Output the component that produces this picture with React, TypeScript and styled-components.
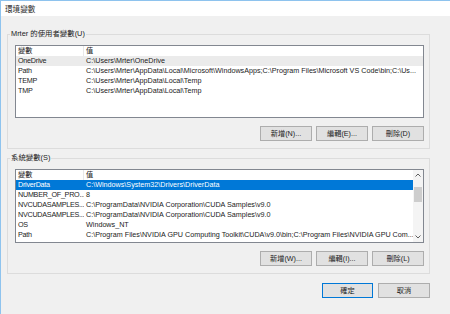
import React from "react";
import styled, { createGlobalStyle } from "styled-components";

const Global = createGlobalStyle`
  html, body { margin: 0; padding: 0; background: #f0f0f0; }
  #root { width: 450px; height: 314px; }
`;

const Window = styled.div`
  width: 450px;
  height: 314px;
  box-sizing: border-box;
  border-top: 1px solid #8ec3ee;
  border-left: 1px solid #8ec3ee;
  background: #f0f0f0;
  display: flex;
  flex-direction: column;
  font-family: "Liberation Sans", "Noto Sans CJK TC", sans-serif;
  font-size: 7.2px;
  color: #1b1b1b;
  overflow: hidden;
`;

const TitleBar = styled.div`
  height: 15px;
  flex: none;
  background: #ffffff;
  display: flex;
  align-items: center;
  padding-left: 4px;
  font-size: 7.6px;
  color: #222;
`;

const Body = styled.div`
  display: flex;
  flex-direction: column;
  padding: 13px 20px 0 6px;
  gap: 4px;
`;

const Group = styled.fieldset`
  margin: 0;
  padding: 0;
  border: 1px solid #dcdcdc;
  min-width: 0;
`;

const Legend = styled.legend`
  margin-left: 2px;
  padding: 0 1px;
  line-height: 10px;
  height: 10px;
  font-size: 7.4px;
  color: #222;
`;

const GroupInner = styled.div`
  padding: 6px 5px 7px 7px;
  display: flex;
  flex-direction: column;
  gap: 8px;
`;

const ListView = styled.div<{ $height: number }>`
  height: ${(p) => p.$height}px;
  box-sizing: border-box;
  border: 1px solid #828790;
  background: #ffffff;
  display: flex;
  overflow: hidden;
`;

const ListBody = styled.div`
  flex: 1;
  min-width: 0;
  display: flex;
  flex-direction: column;
`;

const HeaderRow = styled.div`
  display: grid;
  grid-template-columns: 68px 1fr;
  height: 10px;
  line-height: 10px;
`;

const HeaderCell = styled.div<{ $sep?: boolean }>`
  padding-left: 2px;
  white-space: nowrap;
  overflow: hidden;
  border-right: ${(p) => (p.$sep ? "1px solid #e8e8e8" : "none")};
`;

const Row = styled.div<{ $selected?: boolean; $hover?: boolean }>`
  display: grid;
  grid-template-columns: 68px 1fr;
  height: 10px;
  line-height: 10px;
  background: ${(p) => (p.$selected ? "#0078d7" : p.$hover ? "#ebebeb" : "transparent")};
  color: ${(p) => (p.$selected ? "#ffffff" : "inherit")};
`;

const Cell = styled.div<{ $tight?: boolean }>`
  padding-left: 2px;
  white-space: nowrap;
  overflow: hidden;
  letter-spacing: ${(p) => (p.$tight ? "-0.25px" : "normal")};
`;

const ScrollBar = styled.div`
  width: 10px;
  flex: none;
  background: #f4f4f4;
  display: flex;
  flex-direction: column;
`;

const Arrow = styled.div`
  height: 10px;
  flex: none;
  display: flex;
  align-items: center;
  justify-content: center;
  background: #f4f4f4;
`;

const Track = styled.div`
  flex: 1;
  padding-top: 7px;
`;

const Thumb = styled.div`
  height: 15px;
  margin: 0 1px;
  background: #cdcdcd;
`;

const ButtonRow = styled.div`
  display: flex;
  justify-content: flex-end;
  gap: 4px;
`;

const Button = styled.button<{ $default?: boolean; $w?: number }>`
  width: ${(p) => p.$w ?? 52}px;
  height: 15px;
  box-sizing: border-box;
  padding: 0;
  margin: 0;
  border: 1px solid ${(p) => (p.$default ? "#0078d7" : "#adadad")};
  background: #e1e1e1;
  font-family: inherit;
  font-size: 7.2px;
  color: #1b1b1b;
  line-height: 13px;
`;

const Footer = styled.div`
  display: flex;
  justify-content: flex-end;
  gap: 5px;
  margin-top: 5px;
`;

const Chevron = ({ up }: { up?: boolean }) => (
  <svg width="6" height="4" viewBox="0 0 6 4">
    <polyline
      points={up ? "0.5,3.5 3,1 5.5,3.5" : "0.5,0.5 3,3 5.5,0.5"}
      fill="none"
      stroke="#606060"
      strokeWidth="1"
    />
  </svg>
);

type Item = { name: string; value: string; selected?: boolean; hover?: boolean };

const userVars: Item[] = [
  { name: "OneDrive", value: "C:\\Users\\Mrter\\OneDrive", hover: true },
  {
    name: "Path",
    value:
      "C:\\Users\\Mrter\\AppData\\Local\\Microsoft\\WindowsApps;C:\\Program Files\\Microsoft VS Code\\bin;C:\\Us...",
  },
  { name: "TEMP", value: "C:\\Users\\Mrter\\AppData\\Local\\Temp" },
  { name: "TMP", value: "C:\\Users\\Mrter\\AppData\\Local\\Temp" },
];

const sysVars: Item[] = [
  { name: "DriverData", value: "C:\\Windows\\System32\\Drivers\\DriverData", selected: true },
  { name: "NUMBER_OF_PRO...", value: "8" },
  { name: "NVCUDASAMPLES...", value: "C:\\ProgramData\\NVIDIA Corporation\\CUDA Samples\\v9.0" },
  { name: "NVCUDASAMPLES...", value: "C:\\ProgramData\\NVIDIA Corporation\\CUDA Samples\\v9.0" },
  { name: "OS", value: "Windows_NT" },
  {
    name: "Path",
    value:
      "C:\\Program Files\\NVIDIA GPU Computing Toolkit\\CUDA\\v9.0\\bin;C:\\Program Files\\NVIDIA GPU Com...",
  },
];

const VarList = ({ items, height, scroll }: { items: Item[]; height: number; scroll?: boolean }) => (
  <ListView $height={height}>
    <ListBody>
      <HeaderRow>
        <HeaderCell $sep>變數</HeaderCell>
        <HeaderCell>值</HeaderCell>
      </HeaderRow>
      {items.map((it, i) => (
        <Row key={i} $selected={it.selected} $hover={it.hover}>
          <Cell $tight>{it.name}</Cell>
          <Cell>{it.value}</Cell>
        </Row>
      ))}
    </ListBody>
    {scroll && (
      <ScrollBar>
        <Arrow>
          <Chevron up />
        </Arrow>
        <Track>
          <Thumb />
        </Track>
        <Arrow>
          <Chevron />
        </Arrow>
      </ScrollBar>
    )}
  </ListView>
);

export default function App() {
  return (
    <>
      <Global />
      <Window>
        <TitleBar>環境變數</TitleBar>
        <Body>
          <Group>
            <Legend>Mrter 的使用者變數(U)</Legend>
            <GroupInner>
              <VarList items={userVars} height={73} />
              <ButtonRow>
                <Button>新增(N)...</Button>
                <Button>編輯(E)...</Button>
                <Button>刪除(D)</Button>
              </ButtonRow>
            </GroupInner>
          </Group>
          <Group>
            <Legend>系統變數(S)</Legend>
            <GroupInner>
              <VarList items={sysVars} height={74} scroll />
              <ButtonRow>
                <Button>新增(W)...</Button>
                <Button>編輯(I)...</Button>
                <Button>刪除(L)</Button>
              </ButtonRow>
            </GroupInner>
          </Group>
          <Footer>
            <Button $default $w={51}>確定</Button>
            <Button>取消</Button>
          </Footer>
        </Body>
      </Window>
    </>
  );
}
